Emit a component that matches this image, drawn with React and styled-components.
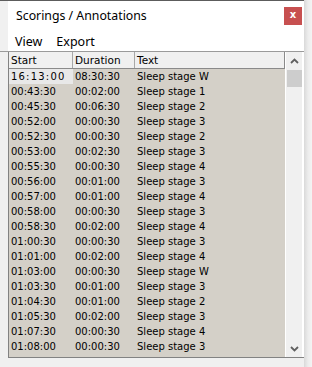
import React from "react";
import styled, { createGlobalStyle } from "styled-components";

const Global = createGlobalStyle`
  html, body { margin: 0; padding: 0; background: #f0f0f0; overflow: hidden; }
  #root { width: 312px; height: 367px; }
`;

const Page = styled.div`
  width: 312px;
  height: 367px;
  box-sizing: border-box;
  background: linear-gradient(to right, #f0f0f0 0, #f0f0f0 304px, #d9d9d9 304px, #ececec 308px, #f4f4f4 312px);
  display: flex;
  flex-direction: column;
`;

const TopLine = styled.div`
  width: 304px;
  height: 1px;
  background: #5c5c5c;
`;

const Panel = styled.div`
  margin-left: 8px;
  width: 296px;
  background: #ffffff;
  display: flex;
  flex-direction: column;
`;

const TitleBar = styled.div`
  height: 30px;
  display: flex;
  align-items: center;
  justify-content: space-between;
  padding: 0 2px 0 8px;
`;

const Title = styled.span`
  font-family: "Noto Sans", "Open Sans", sans-serif;
  font-size: 12.3px;
  color: #000;
  margin-top: -1px;
`;

const CloseButton = styled.div`
  width: 18px;
  height: 18px;
  background: #c75050;
  color: #fff;
  font-family: "DejaVu Sans", sans-serif;
  font-weight: bold;
  font-size: 10px;
  display: flex;
  align-items: center;
  justify-content: center;
  line-height: 1;
  padding-bottom: 2px;
  box-sizing: border-box;
`;

const MenuBar = styled.div`
  height: 20px;
  display: flex;
  align-items: center;
  gap: 14px;
  padding-left: 7px;
`;

const MenuItem = styled.span`
  font-family: "Noto Sans", "Open Sans", sans-serif;
  font-size: 12.5px;
  color: #000;
`;

const Divider = styled.div`
  width: 304px;
  height: 1px;
  background: #9a9a9a;
`;

const Table = styled.div`
  margin-left: 8px;
  width: 296px;
  height: 306px;
  box-sizing: border-box;
  border-left: 1px solid #828282;
  border-bottom: 1px solid #828282;
  background: #ffffff;
  display: flex;
`;

const Grid = styled.div`
  width: 276px;
  display: flex;
  flex-direction: column;
  overflow: hidden;
  font-family: "DejaVu Sans", Verdana, sans-serif;
  font-size: 10px;
  color: #000;
`;

const HeaderRow = styled.div`
  height: 17px;
  flex: none;
  display: grid;
  grid-template-columns: 64px 62px 1fr;
  background: #f0f0f0;
  border-bottom: 1px solid #8a8a8a;
  border-right: 1px solid #8a8a8a;
  box-sizing: border-box;
`;

const HeaderCell = styled.div`
  padding-left: 2px;
  display: flex;
  align-items: center;
  border-right: ${(p) => (p.$last ? "none" : "1px solid #a8a8a8")};
  font-size: 10.5px;
`;

const Body = styled.div`
  flex: 1;
  background: #d4d0c8;
  overflow: hidden;
`;

const Row = styled.div`
  height: 15px;
  display: grid;
  grid-template-columns: 64px 62px 1fr;
`;

const Cell = styled.div`
  padding-left: 2px;
  display: flex;
  align-items: center;
  white-space: nowrap;
  background: ${(p) => (p.$active ? "#e8e8e8" : "transparent")};
  letter-spacing: ${(p) => (p.$active ? "1.2px" : "0")};
`;

const ScrollBar = styled.div`
  margin-left: 1px;
  width: 16px;
  background: #f0f0f0;
  display: flex;
  flex-direction: column;
  align-items: center;
`;

const Arrow = styled.div`
  height: 17px;
  width: 16px;
  display: flex;
  align-items: center;
  justify-content: center;
`;

const Thumb = styled.div`
  width: 15px;
  height: 17px;
  margin-top: 1px;
  background: #cdcdcd;
`;

const Track = styled.div`
  flex: 1;
`;

const Chevron = ({ up }) => (
  <svg width="9" height="6" viewBox="0 0 9 6">
    <path
      d={up ? "M1 5 L4.5 1.5 L8 5" : "M1 1 L4.5 4.5 L8 1"}
      fill="none"
      stroke="#606060"
      strokeWidth="1.8"
    />
  </svg>
);

const rows = [
  ["16:13:00", "08:30:30", "Sleep stage W"],
  ["00:43:30", "00:02:00", "Sleep stage 1"],
  ["00:45:30", "00:06:30", "Sleep stage 2"],
  ["00:52:00", "00:00:30", "Sleep stage 3"],
  ["00:52:30", "00:00:30", "Sleep stage 2"],
  ["00:53:00", "00:02:30", "Sleep stage 3"],
  ["00:55:30", "00:00:30", "Sleep stage 4"],
  ["00:56:00", "00:01:00", "Sleep stage 3"],
  ["00:57:00", "00:01:00", "Sleep stage 4"],
  ["00:58:00", "00:00:30", "Sleep stage 3"],
  ["00:58:30", "00:02:00", "Sleep stage 4"],
  ["01:00:30", "00:00:30", "Sleep stage 3"],
  ["01:01:00", "00:02:00", "Sleep stage 4"],
  ["01:03:00", "00:00:30", "Sleep stage W"],
  ["01:03:30", "00:01:00", "Sleep stage 3"],
  ["01:04:30", "00:01:00", "Sleep stage 2"],
  ["01:05:30", "00:02:00", "Sleep stage 3"],
  ["01:07:30", "00:00:30", "Sleep stage 4"],
  ["01:08:00", "00:00:30", "Sleep stage 3"],
  ["01:08:30", "00:00:30", "Sleep stage 2"],
];

export default function App() {
  return (
    <>
      <Global />
      <Page>
        <TopLine />
        <Panel>
          <TitleBar>
            <Title>Scorings / Annotations</Title>
            <CloseButton>x</CloseButton>
          </TitleBar>
          <MenuBar>
            <MenuItem>View</MenuItem>
            <MenuItem>Export</MenuItem>
          </MenuBar>
        </Panel>
        <Divider />
        <Table>
          <Grid>
            <HeaderRow>
              <HeaderCell>Start</HeaderCell>
              <HeaderCell>Duration</HeaderCell>
              <HeaderCell $last>Text</HeaderCell>
            </HeaderRow>
            <Body>
              {rows.map((r, i) => (
                <Row key={i}>
                  <Cell $active={i === 0}>{r[0]}</Cell>
                  <Cell>{r[1]}</Cell>
                  <Cell>{r[2]}</Cell>
                </Row>
              ))}
            </Body>
          </Grid>
          <ScrollBar>
            <Arrow>
              <Chevron up />
            </Arrow>
            <Thumb />
            <Track />
            <Arrow>
              <Chevron />
            </Arrow>
          </ScrollBar>
        </Table>
      </Page>
    </>
  );
}
